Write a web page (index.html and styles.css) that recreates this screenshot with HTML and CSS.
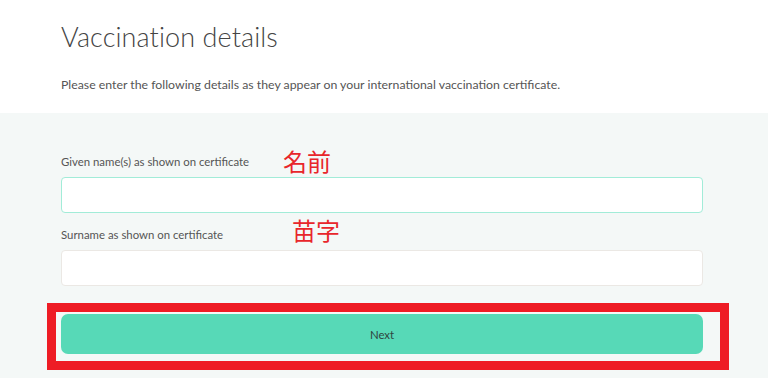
FILE: index.html
```html
<!DOCTYPE html>
<html lang="en">
<head>
    <meta charset="UTF-8">
    <meta name="viewport" content="width=device-width, initial-scale=1.0">
    <title>Vaccination details</title>
    <link rel="stylesheet" href="styles.css">
</head>
<body>
    <div class="header">
        <h1>Vaccination details</h1>
        <p class="intro">Please enter the following details as they appear on your international vaccination certificate.</p>
    </div>

    <div class="form-area">
        <div class="field">
            <label for="given">Given name(s) as shown on certificate</label>
            <input id="given" class="input focused" type="text">
            <span class="note note-given">名前</span>
        </div>
        <div class="field">
            <label for="surname">Surname as shown on certificate</label>
            <input id="surname" class="input" type="text">
            <span class="note note-surname">苗字</span>
        </div>
        <div class="actions">
            <button class="next-btn">Next</button>
        </div>
    </div>
</body>
</html>
```

FILE: styles.css
```css
body {
    margin: 0;
    font-family: Lato, 'Noto Sans', sans-serif;
    background: #f4f8f7;
    color: #444;
}
.header {
    background: #fff;
    height: 113px;
    padding: 0 61px;
    box-sizing: border-box;
    overflow: hidden;
}
.header h1 {
    margin: 0;
    padding-top: 21px;
    font-size: 27px;
    font-weight: 300;
    line-height: 32px;
    color: #444;
    letter-spacing: 0.1px;
}
.intro {
    margin: 25px 0 0;
    font-size: 12.3px;
    line-height: 14px;
    color: #555;
}
.form-area {
    padding: 42px 65px 0 61px;
}
.field {
    position: relative;
    display: flex;
    flex-direction: column;
    margin-bottom: 15px;
}
.field label {
    font-size: 11.4px;
    line-height: 14px;
    color: #555;
    margin-bottom: 8px;
}
.input {
    height: 36px;
    box-sizing: border-box;
    border: 1px solid #ebe8e4;
    border-radius: 4px;
    background: #fff;
    outline: none;
}
.input.focused {
    border: 1.5px solid #a2ecd8;
}
.note {
    position: absolute;
    font-family: 'Noto Sans CJK JP', sans-serif;
    font-size: 24px;
    line-height: 24px;
    color: #e8262b;
}
.note-given {
    left: 222px;
    top: -6px;
}
.note-surname {
    left: 231px;
    top: -10px;
}
/* red annotation frame round the button */
.actions {
    margin: 17px -26px 0 -14px;
    border: 9px solid #ee1c25;
    padding: 2px 17px 7px 5px;
}
.next-btn {
    display: block;
    width: 100%;
    height: 40px;
    border: none;
    border-radius: 7px;
    background: #57d9b7;
    color: #2f4640;
    font-family: Lato, 'Noto Sans', sans-serif;
    font-size: 11.4px;
}
```
